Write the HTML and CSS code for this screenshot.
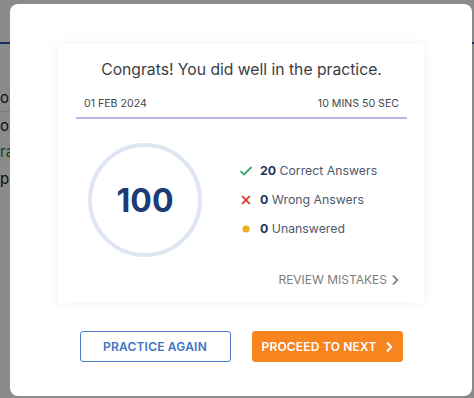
FILE: index.html
```html
<!DOCTYPE html>
<html>
<head>
<meta charset="utf-8">
<link rel="stylesheet" href="styles.css">
</head>
<body>
<div class="page">
  <div class="page-header"></div>
  <div class="page-row">ol</div>
  <div class="page-row sep">ol</div>
  <div class="page-row green">ra</div>
  <div class="page-row">p</div>
</div>
<div class="overlay"></div>
<div class="modal">
  <div class="card">
    <h1 class="title">Congrats! You did well in the practice.</h1>
    <div class="meta">
      <span>01 FEB 2024</span>
      <span>10 MINS 50 SEC</span>
    </div>
    <div class="result">
      <div class="score">100</div>
      <ul class="stats">
        <li>
          <svg class="ico" viewBox="0 0 14 14" width="14" height="14"><path d="M1.5 7.2 L5 10.5 L12.5 3" fill="none" stroke="#2fa86b" stroke-width="1.8"/></svg>
          <span><b>20</b> Correct Answers</span>
        </li>
        <li>
          <svg class="ico" viewBox="0 0 14 14" width="14" height="14"><path d="M3.2 3.2 L10.8 10.8 M10.8 3.2 L3.2 10.8" fill="none" stroke="#d93a35" stroke-width="1.9"/></svg>
          <span><b>0</b> Wrong Answers</span>
        </li>
        <li>
          <svg class="ico" viewBox="0 0 14 14" width="14" height="14"><circle cx="7" cy="7" r="3.6" fill="#e9b020"/></svg>
          <span><b>0</b> Unanswered</span>
        </li>
      </ul>
    </div>
    <div class="review">
      <span>REVIEW MISTAKES</span>
      <svg viewBox="0 0 8 12" width="8" height="12"><path d="M2 1.5 L6.2 6 L2 10.5" fill="none" stroke="#7d7d7d" stroke-width="1.8"/></svg>
    </div>
  </div>
  <div class="actions">
    <button class="btn btn-outline">PRACTICE AGAIN</button>
    <button class="btn btn-primary">PROCEED TO NEXT
      <svg viewBox="0 0 8 12" width="8" height="12"><path d="M2 1.5 L6.2 6 L2 10.5" fill="none" stroke="#ffffff" stroke-width="2"/></svg>
    </button>
  </div>
</div>
</body>
</html>
```
FILE: styles.css
```css
* { box-sizing: border-box; }
html, body { margin: 0; padding: 0; }
body {
  width: 474px;
  height: 398px;
  overflow: hidden;
  font-family: Inter, "Liberation Sans", sans-serif;
  background: #ffffff;
  position: relative;
}
.page {
  width: 474px;
  height: 398px;
  background: #fdfdfd;
}
.page-header {
  height: 44px;
  border-bottom: 2px solid #2f58a8;
}
.page-row {
  font-size: 15px;
  color: #222;
  height: 27px;
  line-height: 27px;
  width: 10px;
  white-space: nowrap;
}
.page-row:nth-child(2) { margin-top: 40px; }
.page-row.sep { border-top: 1px solid #ddd; }
.page-row.green { color: #1f7a2a; }
.overlay {
  position: absolute;
  inset: 0;
  background: rgba(0, 0, 0, 0.45);
}
.modal {
  position: absolute;
  left: 10px;
  top: 4px;
  width: 462px;
  height: 392px;
  background: #ffffff;
  border-radius: 8px;
  padding: 40px 48px 0 48px;
  display: flex;
  flex-direction: column;
  align-items: center;
}
.card {
  width: 366px;
  height: 259px;
  background: #ffffff;
  box-shadow: 0 0 10px rgba(60, 80, 140, 0.08);
  padding: 16px 17px 0 18px;
  display: flex;
  flex-direction: column;
}
.title {
  margin: 0;
  font-size: 15.7px;
  font-weight: 400;
  color: #3a3d42;
  text-align: center;
  line-height: 20px;
}
.meta {
  margin-top: 17px;
  display: flex;
  justify-content: space-between;
  padding: 0 8px 0 8px;
  font-size: 10.6px;
  color: #45474b;
  line-height: 14px;
  height: 22px;
  border-bottom: 2px solid #b7b7e3;
}
.result {
  display: flex;
  align-items: center;
  margin-top: 24px;
  padding-left: 12px;
}
.score {
  width: 114px;
  height: 114px;
  border-radius: 50%;
  border: 4px solid #dee6f3;
  display: flex;
  align-items: center;
  justify-content: center;
  font-size: 32px;
  font-weight: 700;
  color: #1c3c78;
  flex: none;
}
.stats {
  list-style: none;
  margin: 0 0 0 37px;
  padding: 0;
  display: flex;
  flex-direction: column;
  gap: 13px;
}
.stats li {
  display: flex;
  align-items: center;
  font-size: 12.3px;
  color: #4d5a6e;
  line-height: 16px;
  white-space: nowrap;
}
.stats b {
  color: #1e3457;
  font-weight: 700;
}
.ico { margin-right: 7px; flex: none; }
.review {
  margin-top: 15px;
  align-self: flex-end;
  margin-right: 8px;
  display: flex;
  align-items: center;
  gap: 4px;
  font-size: 12px;
  color: #7d7d7d;
  line-height: 16px;
}
.actions {
  margin-top: 28px;
  display: flex;
  gap: 21px;
}
.btn {
  width: 151px;
  height: 31px;
  border-radius: 3px;
  font-family: Inter, "Liberation Sans", sans-serif;
  font-size: 12px;
  font-weight: 600;
  display: flex;
  align-items: center;
  justify-content: center;
  gap: 8px;
  padding: 0;
  letter-spacing: 0.2px;
}
.btn-outline {
  background: #ffffff;
  border: 1px solid #4a7dc6;
  color: #3f74c2;
}
.btn-primary {
  background: #f7841f;
  border: 1px solid #f7841f;
  color: #ffffff;
}
```
